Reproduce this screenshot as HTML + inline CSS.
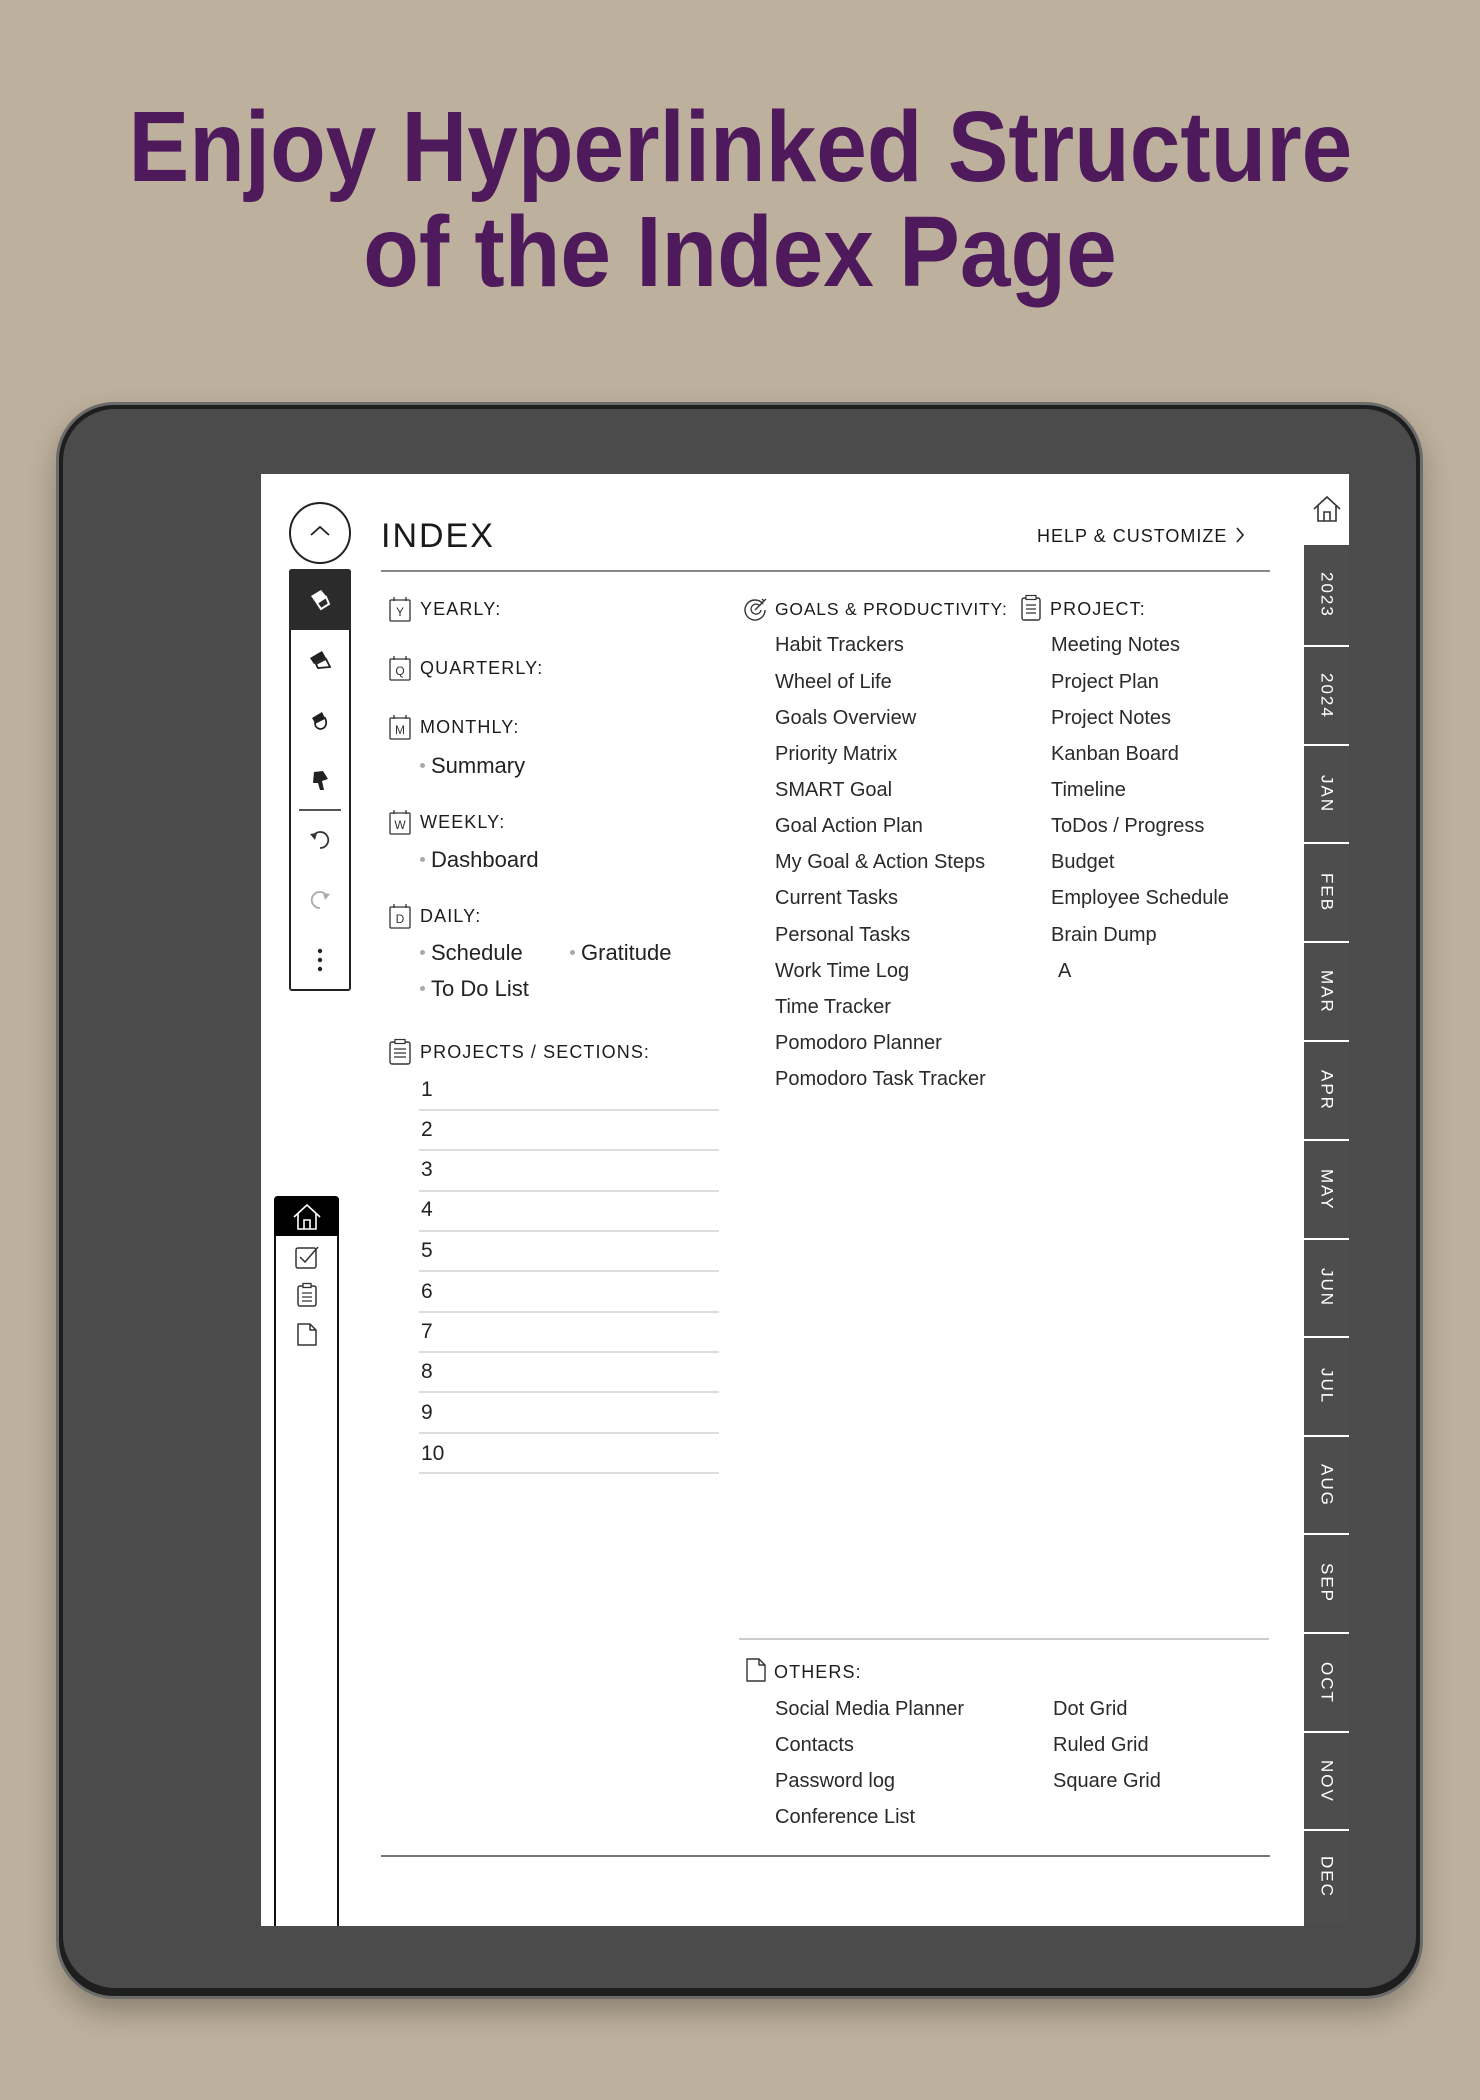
<!DOCTYPE html>
<html><head><meta charset="utf-8"><style>
*{margin:0;padding:0;box-sizing:border-box}
body{width:1480px;height:2100px;background:#bdb09c;position:relative;overflow:hidden;font-family:"Liberation Sans",sans-serif;color:#222}
.a{position:absolute;white-space:nowrap}
.title{position:absolute;left:0;width:1480px;text-align:center;color:#4f1a5c;font-weight:bold;font-size:100px;line-height:100px}
.title span{display:inline-block;transform:scaleX(0.91);transform-origin:center}
.dev{position:absolute;left:56px;top:402px;width:1367px;height:1597px;border-radius:58px;background:#6c6c6c;box-shadow:0 14px 28px rgba(0,0,0,.25)}
.dev2{position:absolute;left:3px;top:3px;right:3px;bottom:3px;border-radius:55px;background:#1e1e1e}
.dev3{position:absolute;left:4px;top:4px;right:4px;bottom:8px;border-radius:52px;background:#4b4b4b}
.scr{position:absolute;left:261px;top:474px;width:1043px;height:1452px;background:#fff}
.h{font-size:18px;letter-spacing:1.1px;color:#1c1c1c;line-height:24px}
.it{font-size:20px;color:#2a2a2a;line-height:24px;font-weight:300}
.sub{font-size:22px;color:#222;line-height:26px}
.dot{display:inline-block;width:5px;height:5px;border-radius:50%;background:#aaa;margin-right:6px;vertical-align:middle;position:relative;top:-2px}
.ln{position:absolute;left:419px;width:300px;height:2px;background:#ddd}
.num{font-size:21px;line-height:24px;color:#222}
.tab{position:absolute;left:1304px;width:45px;background:#4d4d4d;border-top:2px solid #fff;color:#fff;font-size:17px;letter-spacing:2px;display:flex;align-items:center;justify-content:center}
.tab span{writing-mode:vertical-rl}
</style></head><body>
<div class="title" style="top:97px"><span>Enjoy Hyperlinked Structure</span></div>
<div class="title" style="top:202px"><span>of the Index Page</span></div>

<div class="dev"><div class="dev2"><div class="dev3"></div></div></div>
<div class="scr"></div>
<div class="a" style="left:1300px;top:474px;width:49px;height:72px;background:#fff"></div>

<!-- circle -->
<div class="a" style="left:289px;top:502px;width:62px;height:62px;border:2px solid #222;border-radius:50%"></div>
<svg class="a" style="left:309px;top:524px" width="22" height="14"><path d="M2 11 L11 3 L20 11" fill="none" stroke="#222" stroke-width="1.8"/></svg>
<!-- toolbar -->
<div class="a" style="left:289px;top:569px;width:62px;height:422px;border:2px solid #222;border-radius:3px;background:#fff"></div>
<div class="a" style="left:289px;top:569px;width:62px;height:61px;background:#2b2b2b;border-radius:3px 3px 0 0"></div>
<svg class="a" style="left:306px;top:586px" width="28" height="28"><path d="M5 10 L15 4 L20 10 L10 17 Z" fill="#fff"/><path d="M11 17 L20 11 L23 18 L15 23 Z" fill="none" stroke="#fff" stroke-width="2"/></svg>
<svg class="a" style="left:306px;top:646px" width="28" height="28"><path d="M4 12 L16 5 L20 12 L8 18 Z" fill="#222"/><path d="M10 18 L20 13 L24 21 L12 22 Z" fill="none" stroke="#222" stroke-width="1.8"/></svg>
<svg class="a" style="left:306px;top:706px" width="28" height="28"><path d="M6 12 L16 6 L19 12 L9 17 Z" fill="#222"/><path d="M9 17 L19 12 C22 18 19 23 14 23 C10 22 9 20 9 17 Z" fill="none" stroke="#222" stroke-width="1.8"/></svg>
<svg class="a" style="left:306px;top:766px" width="28" height="28"><path d="M8 6 L17 5 L22 13 L16 15 L18 24 L14 24 L12 17 L7 17 Z" fill="#222"/></svg>
<div class="a" style="left:299px;top:809px;width:42px;height:2px;background:#555"></div>
<svg class="a" style="left:306px;top:826px" width="28" height="28"><path d="M8 9 A8 8 0 1 1 14 22" fill="none" stroke="#333" stroke-width="1.8"/><path d="M4 8 L9 14 L11 7 Z" fill="#333"/></svg>
<svg class="a" style="left:306px;top:886px" width="28" height="28"><path d="M20 9 A8 8 0 1 0 14 22" fill="none" stroke="#aaa" stroke-width="1.8"/><path d="M24 8 L19 14 L17 7 Z" fill="#aaa"/></svg>
<svg class="a" style="left:316px;top:948px" width="8" height="26"><circle cx="4" cy="3" r="2.2" fill="#222"/><circle cx="4" cy="12" r="2.2" fill="#222"/><circle cx="4" cy="21" r="2.2" fill="#222"/></svg>

<!-- lower sidebar -->
<div class="a" style="left:274px;top:1196px;width:65px;height:730px;border:2px solid #111;border-bottom:none;border-radius:4px 4px 0 0;background:#fff"></div>
<div class="a" style="left:274px;top:1196px;width:65px;height:40px;background:#000;border-radius:4px 4px 0 0"></div>
<svg class="a" style="left:292px;top:1203px" width="30" height="28"><path d="M2 14 L15 2 L28 14 M6 11 V26 H24 V11 M12 26 V17 H18 V26" fill="none" stroke="#fff" stroke-width="1.6"/></svg>
<svg class="a" style="left:293px;top:1244px" width="28" height="26"><rect x="3" y="4" width="20" height="20" rx="2" fill="none" stroke="#333" stroke-width="1.5"/><path d="M7 13 L12 18 L25 3" fill="none" stroke="#333" stroke-width="1.5"/></svg>
<svg class="a" style="left:295px;top:1282px" width="24" height="26"><rect x="3" y="4" width="18" height="20" rx="2" fill="none" stroke="#333" stroke-width="1.5"/><rect x="8" y="1.5" width="8" height="4" fill="#fff" stroke="#333" stroke-width="1.3"/><path d="M7 11 H17 M7 15 H17 M7 19 H17" stroke="#333" stroke-width="1.3"/></svg>
<svg class="a" style="left:295px;top:1321px" width="24" height="26"><path d="M3 3 H15 L21 9 V24 H3 Z M15 3 V9 H21" fill="none" stroke="#333" stroke-width="1.5" stroke-linejoin="round"/></svg>

<!-- header -->
<div class="a" style="left:381px;top:516px;font-size:34px;letter-spacing:2px;color:#1a1a1a;font-weight:300;line-height:40px">INDEX</div>
<div class="a" style="left:1037px;top:525px;font-size:18px;letter-spacing:1px;color:#1a1a1a;line-height:22px">HELP &amp; CUSTOMIZE</div>
<svg class="a" style="left:1234px;top:525px" width="12" height="20"><path d="M3 3 L9 10 L3 17" fill="none" stroke="#222" stroke-width="1.6"/></svg>
<div class="a" style="left:381px;top:570px;width:889px;height:2px;background:#888"></div>
<svg class="a" style="left:1312px;top:494px" width="30" height="30"><path d="M2 15 L15 3 L28 15 M6 12 V27 H24 V12 M12 27 V18 H18 V27" fill="none" stroke="#333" stroke-width="1.6"/></svg>

<!-- tabs -->
<div class="tab" style="top:545px;height:100px;border-top:none"><span>2023</span></div>
<div class="tab" style="top:645px;height:99px"><span>2024</span></div>
<div class="tab" style="top:744px;height:98px"><span>JAN</span></div>
<div class="tab" style="top:842px;height:99px"><span>FEB</span></div>
<div class="tab" style="top:941px;height:99px"><span>MAR</span></div>
<div class="tab" style="top:1040px;height:99px"><span>APR</span></div>
<div class="tab" style="top:1139px;height:99px"><span>MAY</span></div>
<div class="tab" style="top:1238px;height:98px"><span>JUN</span></div>
<div class="tab" style="top:1336px;height:99px"><span>JUL</span></div>
<div class="tab" style="top:1435px;height:98px"><span>AUG</span></div>
<div class="tab" style="top:1533px;height:99px"><span>SEP</span></div>
<div class="tab" style="top:1632px;height:99px"><span>OCT</span></div>
<div class="tab" style="top:1731px;height:98px"><span>NOV</span></div>
<div class="tab" style="top:1829px;height:94px;border-radius:0 0 4px 4px"><span>DEC</span></div>

<!-- left column headings -->
<svg width="0" height="0" style="position:absolute"><defs><g id="cal"><rect x="1" y="4" width="20" height="21" rx="1" fill="#fff" stroke="#333" stroke-width="1.3"/><path d="M5 1 V5 M17 1 V5" stroke="#333" stroke-width="1.3"/></g></defs></svg>
<div class="a" style="left:389px;top:596px"><svg width="22" height="26"><use href="#cal"/><text x="11" y="20" font-size="12" text-anchor="middle" font-family="Liberation Sans" fill="#333">Y</text></svg></div>
<div class="a h" style="left:420px;top:597px">YEARLY:</div>
<div class="a" style="left:389px;top:655px"><svg width="22" height="26"><use href="#cal"/><text x="11" y="20" font-size="12" text-anchor="middle" font-family="Liberation Sans" fill="#333">Q</text></svg></div>
<div class="a h" style="left:420px;top:656px">QUARTERLY:</div>
<div class="a" style="left:389px;top:714px"><svg width="22" height="26"><use href="#cal"/><text x="11" y="20" font-size="12" text-anchor="middle" font-family="Liberation Sans" fill="#333">M</text></svg></div>
<div class="a h" style="left:420px;top:715px">MONTHLY:</div>
<div class="a sub" style="left:420px;top:753px"><span class="dot"></span>Summary</div>
<div class="a" style="left:389px;top:809px"><svg width="22" height="26"><use href="#cal"/><text x="11" y="20" font-size="12" text-anchor="middle" font-family="Liberation Sans" fill="#333">W</text></svg></div>
<div class="a h" style="left:420px;top:810px">WEEKLY:</div>
<div class="a sub" style="left:420px;top:847px"><span class="dot"></span>Dashboard</div>
<div class="a" style="left:389px;top:903px"><svg width="22" height="26"><use href="#cal"/><text x="11" y="20" font-size="12" text-anchor="middle" font-family="Liberation Sans" fill="#333">D</text></svg></div>
<div class="a h" style="left:420px;top:904px">DAILY:</div>
<div class="a sub" style="left:420px;top:940px"><span class="dot"></span>Schedule</div>
<div class="a sub" style="left:570px;top:940px"><span class="dot"></span>Gratitude</div>
<div class="a sub" style="left:420px;top:976px"><span class="dot"></span>To Do List</div>
<svg class="a" style="left:388px;top:1038px" width="24" height="28"><rect x="2" y="4" width="20" height="22" rx="2" fill="none" stroke="#333" stroke-width="1.4"/><rect x="7" y="1.5" width="10" height="4" fill="#fff" stroke="#333" stroke-width="1.2"/><path d="M6 11 H18 M6 15 H18 M6 19 H18" stroke="#333" stroke-width="1.2"/></svg>
<div class="a h" style="left:420px;top:1040px">PROJECTS / SECTIONS:</div>

<div class="a num" style="left:421px;top:1078px">1</div><div class="ln" style="top:1109px"></div>
<div class="a num" style="left:421px;top:1118px">2</div><div class="ln" style="top:1149px"></div>
<div class="a num" style="left:421px;top:1158px">3</div><div class="ln" style="top:1190px"></div>
<div class="a num" style="left:421px;top:1198px">4</div><div class="ln" style="top:1230px"></div>
<div class="a num" style="left:421px;top:1239px">5</div><div class="ln" style="top:1270px"></div>
<div class="a num" style="left:421px;top:1280px">6</div><div class="ln" style="top:1311px"></div>
<div class="a num" style="left:421px;top:1320px">7</div><div class="ln" style="top:1351px"></div>
<div class="a num" style="left:421px;top:1360px">8</div><div class="ln" style="top:1391px"></div>
<div class="a num" style="left:421px;top:1401px">9</div><div class="ln" style="top:1432px"></div>
<div class="a num" style="left:421px;top:1442px">10</div><div class="ln" style="top:1472px"></div>

<!-- goals column -->
<svg class="a" style="left:743px;top:596px" width="26" height="26"><path d="M20 8 A10 10 0 1 0 22 14" fill="none" stroke="#333" stroke-width="1.4"/><path d="M17 10 A5 5 0 1 0 18 14" fill="none" stroke="#333" stroke-width="1.3"/><path d="M12 14 L21 5 M19 3 L21 5 L23 3" fill="none" stroke="#333" stroke-width="1.4"/></svg>
<div class="a h" style="left:775px;top:597px;font-size:17.5px;letter-spacing:0.8px">GOALS &amp; PRODUCTIVITY:</div>
<svg class="a" style="left:1020px;top:594px" width="22" height="28"><rect x="2" y="4" width="18" height="22" rx="2" fill="#fff" stroke="#333" stroke-width="1.4"/><rect x="6" y="1.5" width="10" height="4" fill="#fff" stroke="#333" stroke-width="1.2"/><path d="M6 11 H16 M6 15 H16 M6 19 H16" stroke="#333" stroke-width="1.2"/></svg>
<div class="a h" style="left:1050px;top:597px">PROJECT:</div>

<div class="a it" style="left:775px;top:633px">Habit Trackers</div>
<div class="a it" style="left:775px;top:670px">Wheel of Life</div>
<div class="a it" style="left:775px;top:706px">Goals Overview</div>
<div class="a it" style="left:775px;top:742px">Priority Matrix</div>
<div class="a it" style="left:775px;top:778px">SMART Goal</div>
<div class="a it" style="left:775px;top:814px">Goal Action Plan</div>
<div class="a it" style="left:775px;top:850px">My Goal &amp; Action Steps</div>
<div class="a it" style="left:775px;top:886px">Current Tasks</div>
<div class="a it" style="left:775px;top:923px">Personal Tasks</div>
<div class="a it" style="left:775px;top:959px">Work Time Log</div>
<div class="a it" style="left:775px;top:995px">Time Tracker</div>
<div class="a it" style="left:775px;top:1031px">Pomodoro Planner</div>
<div class="a it" style="left:775px;top:1067px">Pomodoro Task Tracker</div>

<div class="a it" style="left:1051px;top:633px">Meeting Notes</div>
<div class="a it" style="left:1051px;top:670px">Project Plan</div>
<div class="a it" style="left:1051px;top:706px">Project Notes</div>
<div class="a it" style="left:1051px;top:742px">Kanban Board</div>
<div class="a it" style="left:1051px;top:778px">Timeline</div>
<div class="a it" style="left:1051px;top:814px">ToDos / Progress</div>
<div class="a it" style="left:1051px;top:850px">Budget</div>
<div class="a it" style="left:1051px;top:886px">Employee Schedule</div>
<div class="a it" style="left:1051px;top:923px">Brain Dump</div>
<div class="a it" style="left:1058px;top:959px">A</div>

<!-- others -->
<div class="a" style="left:739px;top:1638px;width:530px;height:2px;background:#ccc"></div>
<svg class="a" style="left:745px;top:1657px" width="22" height="26"><path d="M2 2 H14 L20 8 V24 H2 Z M14 2 V8 H20" fill="none" stroke="#333" stroke-width="1.4" stroke-linejoin="round"/></svg>
<div class="a h" style="left:774px;top:1660px">OTHERS:</div>
<div class="a it" style="left:775px;top:1697px">Social Media Planner</div>
<div class="a it" style="left:775px;top:1733px">Contacts</div>
<div class="a it" style="left:775px;top:1769px">Password log</div>
<div class="a it" style="left:775px;top:1805px">Conference List</div>
<div class="a it" style="left:1053px;top:1697px">Dot Grid</div>
<div class="a it" style="left:1053px;top:1733px">Ruled Grid</div>
<div class="a it" style="left:1053px;top:1769px">Square Grid</div>

<div class="a" style="left:381px;top:1855px;width:889px;height:2px;background:#777"></div>
</body></html>
